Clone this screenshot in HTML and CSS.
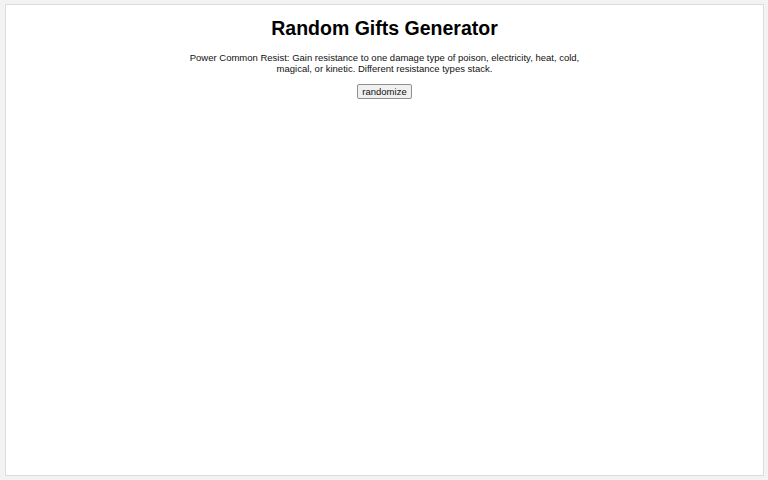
FILE: index.html
```html
<!DOCTYPE html>
<html lang="en">
<head>
    <meta charset="UTF-8">
    <meta name="viewport" content="width=device-width, initial-scale=1.0">
    <title>Random Gifts Generator</title>
    <link rel="stylesheet" href="styles.css">
</head>
<body>
    <main class="page">
        <h1>Random Gifts Generator</h1>
        <p class="gift">Power Common Resist: Gain resistance to one damage type of poison, electricity, heat, cold, magical, or kinetic. Different resistance types stack.</p>
        <button type="button" class="roll">randomize</button>
    </main>
</body>
</html>
```

FILE: styles.css
```css
*{
    margin: 0px;
    padding: 0px;
    box-sizing: border-box;
}

body{
    background-color: #f3f3f3;
    padding: 4px 4px 4px 5px;
    height: 480px;
    font-family: "Liberation Sans", Arial, sans-serif;
    color: #000;
}

.page{
    display: flex;
    flex-direction: column;
    align-items: center;
    height: 472px;
    background-color: #fff;
    border: 1px solid #dcdcdc;
    padding-top: 12px;
    text-align: center;
}

h1{
    font-size: 19.5px;
    font-weight: bold;
    margin-bottom: 12px;
}

.gift{
    font-size: 9.5px;
    line-height: 11px;
    max-width: 400px;
    margin-bottom: 10px;
    color: #111;
}

.roll{
    font-family: "Liberation Sans", Arial, sans-serif;
    font-size: 9.5px;
    padding: 1px 4px;
    background-color: #f0f0f0;
    border: 1px solid #8f8f8f;
    border-radius: 2px;
    color: #111;
}
```
